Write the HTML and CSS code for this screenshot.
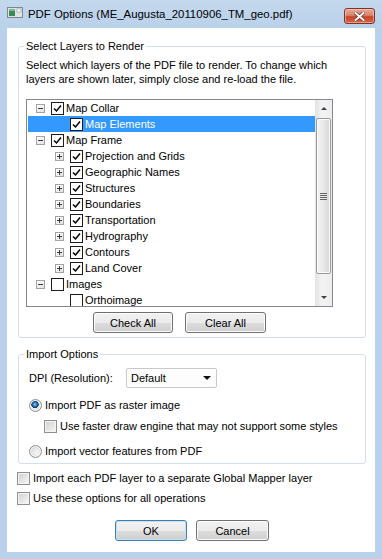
FILE: index.html
```html
<!DOCTYPE html>
<html lang="en">
<head>
    <meta charset="UTF-8">
    <title>PDF Options</title>
    <link rel="stylesheet" href="styles.css">
</head>
<body>
    <div class="window">
        <!-- title bar -->
        <div class="titlebar">
            <svg class="app-icon" viewBox="0 0 16 16">
                <rect x="0.5" y="2.5" width="15" height="10" fill="#dfe3e6" stroke="#7d8790"/>
                <rect x="2" y="4" width="6" height="7" fill="#3d8a57"/>
                <rect x="2" y="4" width="6" height="2" fill="#7fb88e"/>
                <rect x="10" y="4" width="4" height="3" fill="#fff" stroke="#8a949c" stroke-width="0.6"/>
            </svg>
            <span class="title">PDF Options (ME_Augusta_20110906_TM_geo.pdf)</span>
            <div class="close-btn">
                <svg viewBox="0 0 11 9" width="11" height="9">
                    <path d="M1.5 1 L9.5 8 M9.5 1 L1.5 8" stroke="#6b2a1e" stroke-width="3.4" stroke-linecap="square"/>
                    <path d="M1.5 1 L9.5 8 M9.5 1 L1.5 8" stroke="#fff" stroke-width="2" stroke-linecap="square"/>
                </svg>
            </div>
        </div>

        <div class="client">
            <!-- layers -->
            <fieldset class="group group-layers">
                <legend>Select Layers to Render</legend>
                <p class="hint">Select which layers of the PDF file to render. To change which<br>layers are shown later, simply close and re-load the file.</p>
                <div class="tree">
                    <ul class="tree-list">
                        <li class="node"><span class="exp minus"></span><span class="tcheck on"></span><span class="label">Map Collar</span></li>
                        <li class="node lvl1 selected"><span class="exp none"></span><span class="tcheck on"></span><span class="label">Map Elements</span></li>
                        <li class="node"><span class="exp minus"></span><span class="tcheck on"></span><span class="label">Map Frame</span></li>
                        <li class="node lvl1"><span class="exp plus"></span><span class="tcheck on"></span><span class="label">Projection and Grids</span></li>
                        <li class="node lvl1"><span class="exp plus"></span><span class="tcheck on"></span><span class="label">Geographic Names</span></li>
                        <li class="node lvl1"><span class="exp plus"></span><span class="tcheck on"></span><span class="label">Structures</span></li>
                        <li class="node lvl1"><span class="exp plus"></span><span class="tcheck on"></span><span class="label">Boundaries</span></li>
                        <li class="node lvl1"><span class="exp plus"></span><span class="tcheck on"></span><span class="label">Transportation</span></li>
                        <li class="node lvl1"><span class="exp plus"></span><span class="tcheck on"></span><span class="label">Hydrography</span></li>
                        <li class="node lvl1"><span class="exp plus"></span><span class="tcheck on"></span><span class="label">Contours</span></li>
                        <li class="node lvl1"><span class="exp plus"></span><span class="tcheck on"></span><span class="label">Land Cover</span></li>
                        <li class="node"><span class="exp minus"></span><span class="tcheck"></span><span class="label">Images</span></li>
                        <li class="node lvl1"><span class="exp none"></span><span class="tcheck"></span><span class="label">Orthoimage</span></li>
                    </ul>
                    <div class="vscroll">
                        <div class="sb-arrow"><span class="tri up"></span></div>
                        <div class="sb-thumb"><span class="grip"></span></div>
                        <div class="sb-track"></div>
                        <div class="sb-arrow"><span class="tri down"></span></div>
                    </div>
                </div>
                <div class="btn-row tree-btns">
                    <button class="btn btn-check">Check All</button>
                    <button class="btn btn-clear">Clear All</button>
                </div>
            </fieldset>

            <!-- import options -->
            <fieldset class="group group-import">
                <legend>Import Options</legend>
                <div class="opt-row dpi-row">
                    <span class="dpi-label">DPI (Resolution):</span>
                    <div class="combo"><span>Default</span><span class="combo-arrow"></span></div>
                </div>
                <div class="opt-row radio-row first-radio">
                    <span class="radio on"></span><span>Import PDF as raster image</span>
                </div>
                <div class="opt-row check-row sub-check">
                    <span class="check"></span><span>Use faster draw engine that may not support some styles</span>
                </div>
                <div class="opt-row radio-row second-radio">
                    <span class="radio"></span><span>Import vector features from PDF</span>
                </div>
            </fieldset>

            <div class="opt-row check-row bottom-check first-bottom">
                <span class="check"></span><span>Import each PDF layer to a separate Global Mapper layer</span>
            </div>
            <div class="opt-row check-row bottom-check">
                <span class="check"></span><span>Use these options for all operations</span>
            </div>

            <div class="btn-row dialog-btns">
                <button class="btn btn-ok default">OK</button>
                <button class="btn btn-cancel">Cancel</button>
            </div>
        </div>
    </div>
</body>
</html>
```

FILE: styles.css
```css
html, body {
    margin: 0;
    padding: 0;
}
body {
    width: 382px;
    height: 559px;
    overflow: hidden;
    font-family: "Liberation Sans", Arial, sans-serif;
    font-size: 11px;
    color: #000;
    background: #b9d1ea;
}
.window {
    height: 559px;
    box-sizing: border-box;
    padding: 0 7px 7px;
    background: linear-gradient(#c4d8ed, #b9d1ea 30px);
}

/* title bar */
.titlebar {
    height: 28px;
    display: flex;
    align-items: center;
}
.app-icon {
    width: 16px;
    height: 16px;
    margin-right: 5px;
    margin-top: -2px;
}
.title {
    flex: 1;
    font-family: "Liberation Sans", Arial, sans-serif;
    font-size: 11.4px;
    color: #000;
}
.close-btn {
    align-self: flex-start;
    margin-top: 8px;
    width: 31px;
    height: 16px;
    box-sizing: border-box;
    border: 1px solid #7e3325;
    border-radius: 3px;
    background: linear-gradient(#e9a899, #d88570 45%, #c8452b 55%, #d2644a);
    box-shadow: inset 0 0 0 1px rgba(255, 220, 210, 0.5);
    display: flex;
    align-items: center;
    justify-content: center;
}

/* client area */
.client {
    height: 524px;
    box-sizing: border-box;
    padding: 11px 9px 0 11px;
    background: #fff;
}
.group {
    margin: 0;
    padding: 5px 7px 4px;
    border: 1px solid #d5dfe5;
    border-radius: 3px;
}
.group legend {
    padding: 0 2px;
    margin-left: -2px;
    line-height: 14px;
}
.hint {
    margin: 0;
    line-height: 14px;
}

/* tree view */
.tree {
    margin-top: 13px;
    width: 307px;
    height: 208px;
    box-sizing: border-box;
    border: 1px solid #828790;
    display: flex;
    overflow: hidden;
}
.tree-list {
    list-style: none;
    margin: 0;
    padding: 0 0 0 1px;
    flex: 1;
}
.node {
    height: 16px;
    display: flex;
    align-items: center;
    padding-left: 8px;
}
.node.lvl1 {
    padding-left: 27px;
}
.node.selected {
    background: #3399ff;
    color: #fff;
}
.exp {
    width: 9px;
    height: 9px;
    box-sizing: border-box;
    margin-right: 6px;
    position: relative;
}
.exp.minus, .exp.plus {
    border: 1px solid #a3a3a3;
    background: linear-gradient(135deg, #fff, #e2e2e2);
}
.exp.minus::before, .exp.plus::before {
    content: "";
    position: absolute;
    left: 1px;
    top: 3px;
    width: 5px;
    height: 1px;
    background: #3a3a3a;
}
.exp.plus::after {
    content: "";
    position: absolute;
    left: 3px;
    top: 1px;
    width: 1px;
    height: 5px;
    background: #3a3a3a;
}
.tcheck {
    width: 13px;
    height: 13px;
    box-sizing: border-box;
    border: 1px solid #1c1c1c;
    background: #fff;
    margin-right: 2px;
}
.tcheck.on {
    background: #fff url("data:image/svg+xml,%3Csvg xmlns='http://www.w3.org/2000/svg' width='11' height='11'%3E%3Cpath d='M2 5.5 L4.5 8 L9 2.5' fill='none' stroke='%23000' stroke-width='1.5'/%3E%3C/svg%3E") no-repeat center;
}
.label {
    white-space: nowrap;
}

/* scroll bar */
.vscroll {
    width: 17px;
    display: flex;
    flex-direction: column;
    background: linear-gradient(to right, #e2e2e2, #f3f3f3 40%, #ededed);
}
.sb-arrow {
    height: 17px;
    display: flex;
    align-items: center;
    justify-content: center;
}
.tri {
    width: 0;
    height: 0;
    border-left: 3px solid transparent;
    border-right: 3px solid transparent;
}
.tri.up {
    border-bottom: 3px solid #3e3e3e;
}
.tri.down {
    border-top: 3px solid #3e3e3e;
}
.sb-thumb {
    height: 156px;
    margin: 1px 1px 0;
    box-sizing: border-box;
    border: 1px solid #9b9b9b;
    border-radius: 2px;
    background: linear-gradient(to right, #f4f4f4, #e8e8e8 50%, #d6d6d6);
    box-shadow: inset 0 0 0 1px #fbfbfb;
    display: flex;
    align-items: center;
    justify-content: center;
}
.grip {
    width: 7px;
    height: 7px;
    background: repeating-linear-gradient(#666 0 1px, transparent 1px 2px);
}
.sb-track {
    flex: 1;
}

/* buttons */
.btn-row {
    display: flex;
    justify-content: center;
}
.tree-btns {
    width: 307px;
    margin-top: 5px;
    gap: 12px;
}
.btn {
    height: 21px;
    padding: 0;
    font-family: inherit;
    font-size: 11px;
    color: #000;
    border: 1px solid #707070;
    border-radius: 3px;
    background: linear-gradient(#f2f2f2, #ebebeb 50%, #dddddd 51%, #cfcfcf);
    box-shadow: inset 0 0 0 1px #fcfcfc;
}
.btn-check { width: 80px; }
.btn-clear { width: 81px; }
.btn.default {
    border-color: #3c7fb1;
    box-shadow: inset 0 0 0 1px #bfe3f7;
}
.dialog-btns {
    margin-top: 15px;
    gap: 9px;
}
.btn-ok { width: 72px; }
.btn-cancel { width: 73px; }

/* import options */
.group-import {
    margin-top: 9px;
    padding: 7px 7px 5px;
}
.opt-row {
    display: flex;
    align-items: center;
    height: 14px;
    white-space: nowrap;
}
.dpi-row {
    height: 20px;
    padding-left: 3px;
}
.dpi-label {
    width: 97px;
}
.combo {
    width: 91px;
    height: 20px;
    box-sizing: border-box;
    border: 1px solid #c9c9c9;
    border-radius: 2px;
    background: #fdfdfd;
    display: flex;
    align-items: center;
    justify-content: space-between;
    padding: 0 5px 0 4px;
}
.combo-arrow {
    width: 0;
    height: 0;
    border-left: 4px solid transparent;
    border-right: 4px solid transparent;
    border-top: 4px solid #111;
}
.radio-row {
    padding-left: 3px;
}
.first-radio { margin-top: 10px; }
.second-radio { margin-top: 11px; }
.sub-check {
    margin-top: 7px;
    padding-left: 18px;
}
.radio {
    width: 13px;
    height: 13px;
    box-sizing: border-box;
    border-radius: 50%;
    border: 1px solid #8e8f8f;
    background: radial-gradient(circle at 60% 65%, #f6f6f6, #d0d0d0);
    box-shadow: inset 0 0 0 1px #f4f4f4;
    margin-right: 3px;
}
.radio.on {
    background: radial-gradient(circle at 45% 40%, #8ad0f5 0, #2a7ab8 2px, #0d3565 3.5px, #f2f2f2 4px, #d6d6d6 6px);
}
.check {
    width: 13px;
    height: 13px;
    box-sizing: border-box;
    border: 1px solid #8e8f8f;
    background: linear-gradient(135deg, #cfcfcf, #f8f8f8);
    box-shadow: inset 0 0 0 1px #f4f4f4;
    margin-right: 3px;
}
.bottom-check {
    margin-left: -1px;
    margin-top: 6px;
}
.first-bottom {
    margin-top: 7px;
}
```
